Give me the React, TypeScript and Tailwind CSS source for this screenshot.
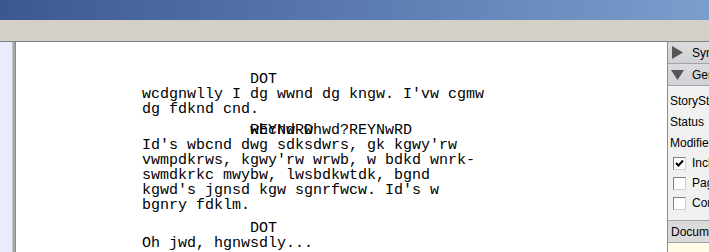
import React from "react";

const mono = { fontFamily: '"Liberation Mono", "Courier New", monospace' };

function Line({ text, indent = false }: { text: string; indent?: boolean }) {
  return <div className={indent ? "pl-[108px] whitespace-pre" : "whitespace-pre"}>{text}</div>;
}

function PanelHeader({ open, label }: { open: boolean; label: string }) {
  return (
    <div className="flex h-[22px] shrink-0 items-center gap-[8px] border-b border-[#a3a3a8] bg-gradient-to-b from-[#dcdce0] to-[#d0d0d5] pl-[3px]">
      {open ? (
        <svg className="shrink-0" width="13" height="12" viewBox="0 0 13 12">
          <path d="M0 1 H13 L6.5 11 Z" fill="#555" />
        </svg>
      ) : (
        <svg className="shrink-0" width="13" height="13" viewBox="0 0 13 13">
          <path d="M1 0 V13 L12 6.5 Z" fill="#555" />
        </svg>
      )}
      <span>{label}</span>
    </div>
  );
}

function Check({ checked, label }: { checked: boolean; label: string }) {
  return (
    <div className="flex h-[20px] items-center gap-[6px] pl-[5px]">
      <div className="flex h-[13px] w-[13px] shrink-0 items-center justify-center border border-t-[#808080] border-l-[#808080] border-r-[#d4d0c8] border-b-[#d4d0c8] bg-white">
        {checked && (
          <svg className="shrink-0" width="9" height="9" viewBox="0 0 9 9">
            <path d="M1 4 L3.5 6.5 L8 1.5" stroke="#000" strokeWidth="2" fill="none" />
          </svg>
        )}
      </div>
      <span>{label}</span>
    </div>
  );
}

export default function App() {
  return (
    <div className="flex h-[252px] w-[709px] flex-col overflow-hidden bg-white">
      <div className="h-[20px] shrink-0 bg-gradient-to-r from-[#3c5893] to-[#7b9ecd]" />
      <div className="h-[22px] shrink-0 border-b border-[#808080] bg-[#d4d0c8]" />

      <div className="flex min-h-0 flex-1">
        <div className="w-[12px] shrink-0 bg-[#e9ecfb]" />
        <div className="w-[4px] shrink-0 border-l border-r border-l-[#c4c4c4] border-r-[#8c8c8c] bg-[#a8a8a8]" />

        {/* script editor */}
        <div
          className="min-w-0 flex-1 bg-white pl-[126px] pt-[30px] text-[15px] leading-[15px] text-black"
          style={mono}
        >
          <Line text="DOT" indent />
          <Line text="wcdgnwlly I dg wwnd dg kngw. I'vw cgmw" />
          <Line text="dg fdknd cnd." />
          <div className="mt-[6px] grid pl-[108px]">
            <div className="col-start-1 row-start-1 whitespace-pre">REYNwRD</div>
            <div className="col-start-1 row-start-1 whitespace-pre">wbcnd whwd?REYNwRD</div>
          </div>
          <Line text="Id's wbcnd dwg sdksdwrs, gk kgwy'rw" />
          <Line text="vwmpdkrws, kgwy'rw wrwb, w bdkd wnrk-" />
          <Line text="swmdkrkc mwybw, lwsbdkwtdk, bgnd" />
          <Line text="kgwd's jgnsd kgw sgnrfwcw. Id's w" />
          <Line text="bgnry fdklm." />
          <div className="mt-[8px]">
            <Line text="DOT" indent />
          </div>
          <Line text="Oh jwd, hgnwsdly..." />
        </div>

        {/* inspector */}
        <div
          className="flex w-[42px] shrink-0 flex-col overflow-hidden whitespace-nowrap border-l border-[#8c8c8c] text-[12px] text-black"
          style={{ fontFamily: '"Liberation Sans", Arial, sans-serif' }}
        >
          <PanelHeader open={false} label="Synopsis" />
          <PanelHeader open label="General" />
          <div className="flex shrink-0 flex-col bg-[#f1f1f1] pb-[7px] pt-[4px]">
            <div className="flex h-[21px] items-center pl-[2px]">StoryStatus</div>
            <div className="flex h-[21px] items-center pl-[2px]">Status</div>
            <div className="flex h-[21px] items-center pl-[2px]">Modified</div>
            <Check checked label="Include" />
            <Check checked={false} label="Page" />
            <Check checked={false} label="Compile" />
          </div>
          <div className="flex h-[23px] shrink-0 items-center border-t border-b border-[#a3a3a8] bg-[#dadada] pl-[3px]">
            Documents
          </div>
          <div className="flex-1 bg-[#fffbe6]" />
        </div>
      </div>
    </div>
  );
}
